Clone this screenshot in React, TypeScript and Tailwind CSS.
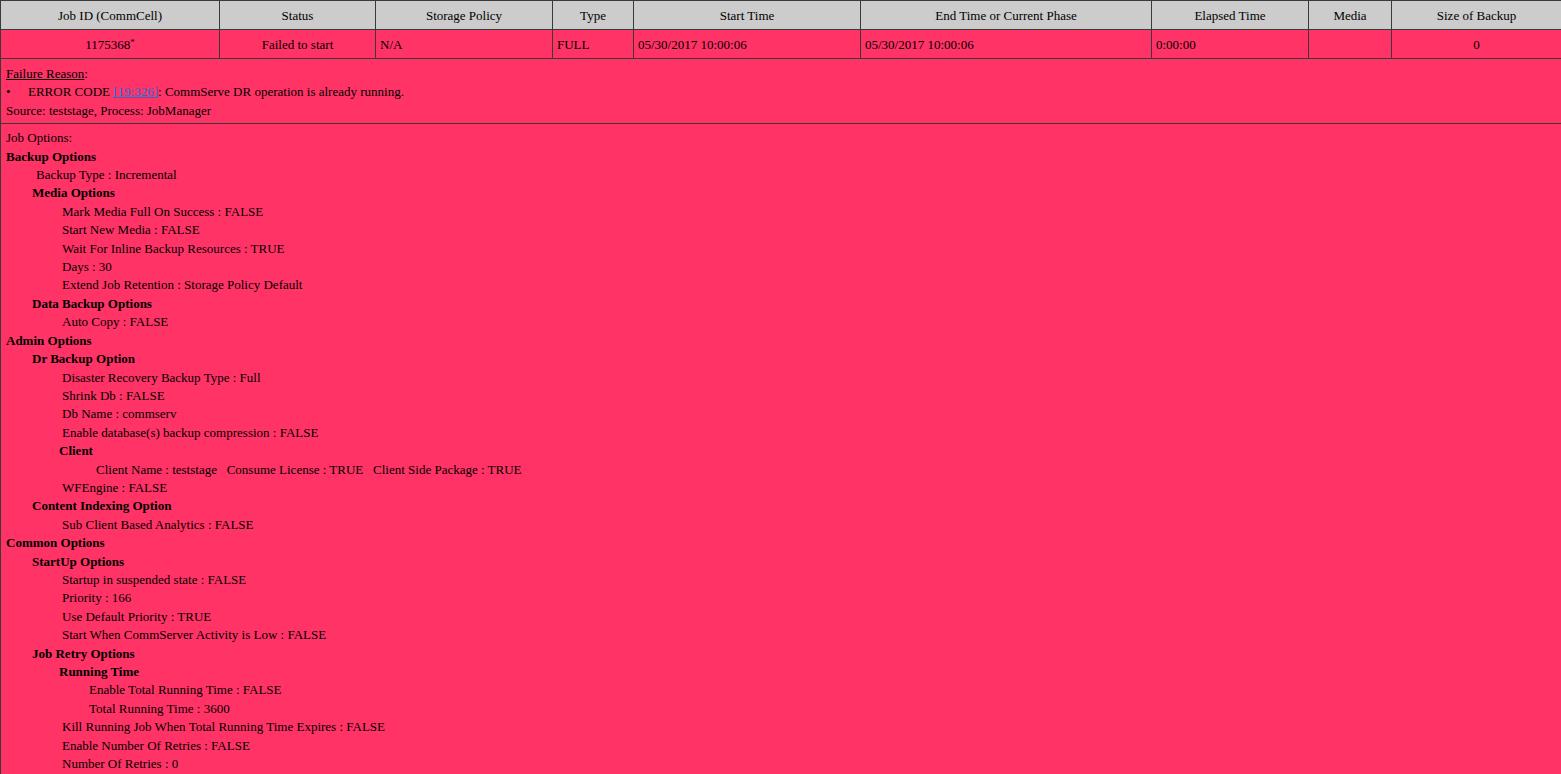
const cols = [
  { t: 'Job ID (CommCell)', w: 219 },
  { t: 'Status', w: 156 },
  { t: 'Storage Policy', w: 177 },
  { t: 'Type', w: 81 },
  { t: 'Start Time', w: 227 },
  { t: 'End Time or Current Phase', w: 291 },
  { t: 'Elapsed Time', w: 157 },
  { t: 'Media', w: 83 },
  { t: 'Size of Backup', w: 170 },
]

// [indent px, bold, text]
const lines: [number, boolean, string][] = [
  [0, false, 'Job Options:'],
  [0, true, 'Backup Options'],
  [30, false, 'Backup Type : Incremental'],
  [26, true, 'Media Options'],
  [56, false, 'Mark Media Full On Success : FALSE'],
  [56, false, 'Start New Media : FALSE'],
  [56, false, 'Wait For Inline Backup Resources : TRUE'],
  [56, false, 'Days : 30'],
  [56, false, 'Extend Job Retention : Storage Policy Default'],
  [26, true, 'Data Backup Options'],
  [56, false, 'Auto Copy : FALSE'],
  [0, true, 'Admin Options'],
  [26, true, 'Dr Backup Option'],
  [56, false, 'Disaster Recovery Backup Type : Full'],
  [56, false, 'Shrink Db : FALSE'],
  [56, false, 'Db Name : commserv'],
  [56, false, 'Enable database(s) backup compression : FALSE'],
  [53, true, 'Client'],
  [90, false, 'Client Name : teststage\u00a0\u00a0\u00a0Consume License : TRUE\u00a0\u00a0\u00a0Client Side Package : TRUE'],
  [56, false, 'WFEngine : FALSE'],
  [26, true, 'Content Indexing Option'],
  [56, false, 'Sub Client Based Analytics : FALSE'],
  [0, true, 'Common Options'],
  [26, true, 'StartUp Options'],
  [56, false, 'Startup in suspended state : FALSE'],
  [56, false, 'Priority : 166'],
  [56, false, 'Use Default Priority : TRUE'],
  [56, false, 'Start When CommServer Activity is Low : FALSE'],
  [26, true, 'Job Retry Options'],
  [53, true, 'Running Time'],
  [83, false, 'Enable Total Running Time : FALSE'],
  [83, false, 'Total Running Time : 3600'],
  [56, false, 'Kill Running Job When Total Running Time Expires : FALSE'],
  [56, false, 'Enable Number Of Retries : FALSE'],
  [56, false, 'Number Of Retries : 0'],
]

export default function App() {
  const cell = 'border border-[#3a3a3a] px-[4px] h-[29px] pt-[2px]'
  return (
    <div className="w-[1561px] h-[774px] overflow-hidden bg-white text-[13px] text-black" style={{ fontFamily: '"Liberation Serif", "Times New Roman", serif' }}>
      <table className="border-collapse table-fixed w-[1561px]">
        <colgroup>
          {cols.map(c => (
            <col key={c.t} style={{ width: c.w }} />
          ))}
        </colgroup>
        <thead>
          <tr className="bg-[#cccccc]">
            {cols.map(c => (
              <th key={c.t} className={`${cell} font-normal text-center`}>
                {c.t}
              </th>
            ))}
          </tr>
        </thead>
        <tbody className="bg-[#ff3366]">
          <tr>
            <td className={`${cell} text-center`}>
              1175368<sup className="text-[9px]">*</sup>
            </td>
            <td className={`${cell} text-center`}>Failed to start</td>
            <td className={cell}>N/A</td>
            <td className={cell}>FULL</td>
            <td className={cell}>05/30/2017 10:00:06</td>
            <td className={cell}>05/30/2017 10:00:06</td>
            <td className={cell}>0:00:00</td>
            <td className={cell}></td>
            <td className={`${cell} text-center`}>0</td>
          </tr>
          <tr>
            <td colSpan={9} className="border border-[#3a3a3a] px-[5px] pt-[6px] pb-[3px] leading-[18.4px]">
              <div>
                <span className="underline">Failure Reason</span>:
              </div>
              <div className="flex">
                <span className="w-[22px]">•</span>
                <span>
                  ERROR CODE <span className="text-[#1a6fd8] underline">[19:326]</span>: CommServe DR operation is already running.
                </span>
              </div>
              <div>Source: teststage, Process: JobManager</div>
            </td>
          </tr>
          <tr>
            <td colSpan={9} className="border border-[#3a3a3a] px-[5px] pt-[5px] pb-[20px] leading-[18.4px]">
              {lines.map(([ind, b, t], i) => (
                <div key={i} className={b ? 'font-bold' : ''} style={{ paddingLeft: ind }}>
                  {t}
                </div>
              ))}
            </td>
          </tr>
        </tbody>
      </table>
    </div>
  )
}
